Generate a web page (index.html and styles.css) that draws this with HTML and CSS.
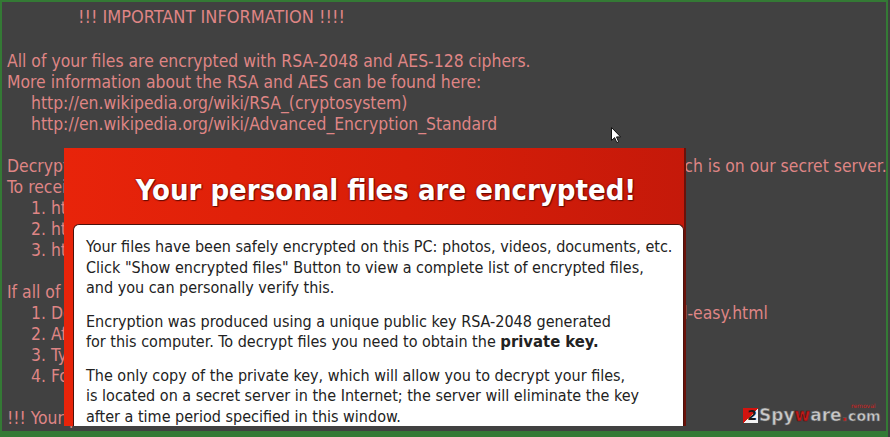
FILE: index.html
```html
<!DOCTYPE html>
<html lang="en">
<head>
<meta charset="utf-8">
<title>Your personal files are encrypted!</title>
<link rel="stylesheet" href="styles.css">
</head>
<body>
<div class="screen">
  <div class="notes">
    <p class="title">!!! IMPORTANT INFORMATION !!!!</p>
    <p class="para first">All of your files are encrypted with RSA-2048 and AES-128 ciphers.</p>
    <p class="line">More information about the RSA and AES can be found here:</p>
    <p class="line ind">http://en.wikipedia.org/wiki/RSA_(cryptosystem)</p>
    <p class="line ind">http://en.wikipedia.org/wiki/Advanced_Encryption_Standard</p>
    <p class="para">Decrypting of your files is only possible with the private key and decrypt program, which is on our secret server.</p>
    <p class="line">To receive your private key follow one of the links:</p>
    <p class="line ind">1. http://7tno4hib47vlep5o.tor2web.org/6A1B92C3D4E5</p>
    <p class="line ind">2. http://7tno4hib47vlep5o.onion.to/6A1B92C3D4E5</p>
    <p class="line ind">3. http://7tno4hib47vlep5o.onion.cab/6A1B92C3D4E5</p>
    <p class="para">If all of this addresses are not available, follow these steps:</p>
    <p class="line ind">1. Download and install Tor Browser: https://www.torproject.org/download/download-easy.html</p>
    <p class="line ind">2. After a successful installation, run the browser and wait for initialization.</p>
    <p class="line ind">3. Type in the address bar: 7tno4hib47vlep5o.onion/6A1B92C3D4E5</p>
    <p class="line ind">4. Follow the instructions on the site.</p>
    <p class="para">!!! Your personal identification ID: 6A1B92C3D4E5 !!!</p>
  </div>

  <svg class="cursor" width="11" height="17" viewBox="0 0 11 17" aria-hidden="true">
    <path d="M0.5 0.5 L0.5 13.5 L3.6 10.6 L5.8 15.6 L7.6 14.8 L5.5 9.9 L9.6 9.9 Z" fill="#fff" stroke="#111" stroke-width="1" stroke-linejoin="round"/>
  </svg>

  <div class="dialog">
    <h1 class="heading">Your personal files are encrypted!</h1>
    <div class="panel">
      <p>Your files have been safely encrypted on this PC: photos, videos, documents, etc.<br>Click "Show encrypted files" Button to view a complete list of encrypted files,<br>and you can personally verify this.</p>
      <p>Encryption was produced using a unique public key RSA-2048 generated<br>for this computer. To decrypt files you need to obtain the <b>private key.</b></p>
      <p>The only copy of the private key, which will allow you to decrypt your files,<br>is located on a secret server in the Internet; the server will eliminate the key<br>after a time period specified in this window.</p>
    </div>
  </div>

  <div class="logo">
    <span class="logo-mark">2</span><span class="logo-word">Spy<span class="logo-w">w</span>are</span><span class="logo-dot">.</span><span class="logo-com"><span class="logo-tag">removal</span>com</span>
  </div>
</div>
</body>
</html>
```

FILE: styles.css
```css
* { box-sizing: border-box; }

html, body {
  margin: 0;
  padding: 0;
  background: #3f3f3f;
}

body {
  width: 890px;
  height: 437px;
  overflow: hidden;
}

.screen {
  position: relative;
  width: 888px;
  height: 437px;
  background: #414141;
  border-top: 2px solid #347a35;
  border-left: 2px solid #347a35;
  border-right: 2px solid #347a35;
  border-bottom: 6px solid #347a35;
  overflow: hidden;
}

.notes {
  padding: 5px 0 0 5px;
  font-family: "DejaVu Sans Condensed", "DejaVu Sans", sans-serif;
  font-stretch: condensed;
  font-size: 17.4px;
  line-height: 21px;
  color: #df8585;
  white-space: nowrap;
}

.notes p { margin: 0; }

.notes .title {
  padding-left: 71px;
  margin-top: -1px;
  font-size: 18px;
}

.notes .para { margin-top: 21px; }
.notes .para.first { margin-top: 24px; }
.notes .ind { padding-left: 24px; }

.cursor {
  position: absolute;
  left: 609px;
  top: 125px;
}

.dialog {
  position: absolute;
  left: 62px;
  top: 146px;
  width: 622px;
  height: 278px;
  background: linear-gradient(to right, #e8240a 0%, #d81e08 55%, #c5190a 100%);
  border-right: 2px solid #6a120a;
  display: flex;
  flex-direction: column;
  overflow: hidden;
}

.heading {
  flex: 0 0 76px;
  margin: 0;
  padding: 25px 0 0 24px;
  text-align: center;
  font-family: "DejaVu Sans Condensed", "DejaVu Sans", sans-serif;
  font-stretch: condensed;
  font-weight: bold;
  font-size: 29px;
  line-height: 34px;
  color: #fff;
  text-shadow: 0 0 2px #5a0a04, 1px 1px 1px #6a0c05;
  white-space: nowrap;
}

.panel {
  flex: 1 1 auto;
  min-height: 0;
  overflow: hidden;
  margin-left: 9px;
  background: #fff;
  border: 1px solid #4a120c;
  border-bottom: none;
  border-radius: 6px 6px 0 0;
  padding: 12px 0 0 12px;
  font-family: "DejaVu Sans Condensed", "DejaVu Sans", sans-serif;
  font-stretch: condensed;
  font-size: 16px;
  line-height: 20.5px;
  color: #222;
  white-space: nowrap;
}

.panel p { margin: 0 0 13px; }
.panel b { font-weight: bold; font-size: 16.5px; }

.logo {
  position: absolute;
  left: 741px;
  top: 403px;
  display: flex;
  align-items: flex-end;
  font-family: "DejaVu Sans", sans-serif;
  font-weight: bold;
  height: 19px;
}

.logo-mark {
  width: 15px;
  height: 15px;
  margin-bottom: 1px;
  margin-right: 1px;
  background: linear-gradient(135deg, #d3140f 0 52%, #f2f2f2 52% 100%);
  color: #1a1a1a;
  font-size: 14px;
  line-height: 15px;
  text-align: right;
  padding-right: 1px;
}

.logo-word,
.logo-dot,
.logo-com {
  font-size: 17px;
  line-height: 17px;
  color: #c9c9c9;
  -webkit-text-stroke: 0.6px #5a5a5a;
  letter-spacing: 0;
}

.logo-w { color: #c21a18; -webkit-text-stroke: 0.6px #5a1010; }
.logo-dot { color: #c21a18; }

.logo-com {
  position: relative;
  font-size: 14px;
  line-height: 14px;
  margin-bottom: 1px;
}

.logo-tag {
  position: absolute;
  left: 3px;
  top: -6px;
  font-size: 6px;
  line-height: 6px;
  font-weight: normal;
  color: #d02020;
  -webkit-text-stroke: 0;
}
```
